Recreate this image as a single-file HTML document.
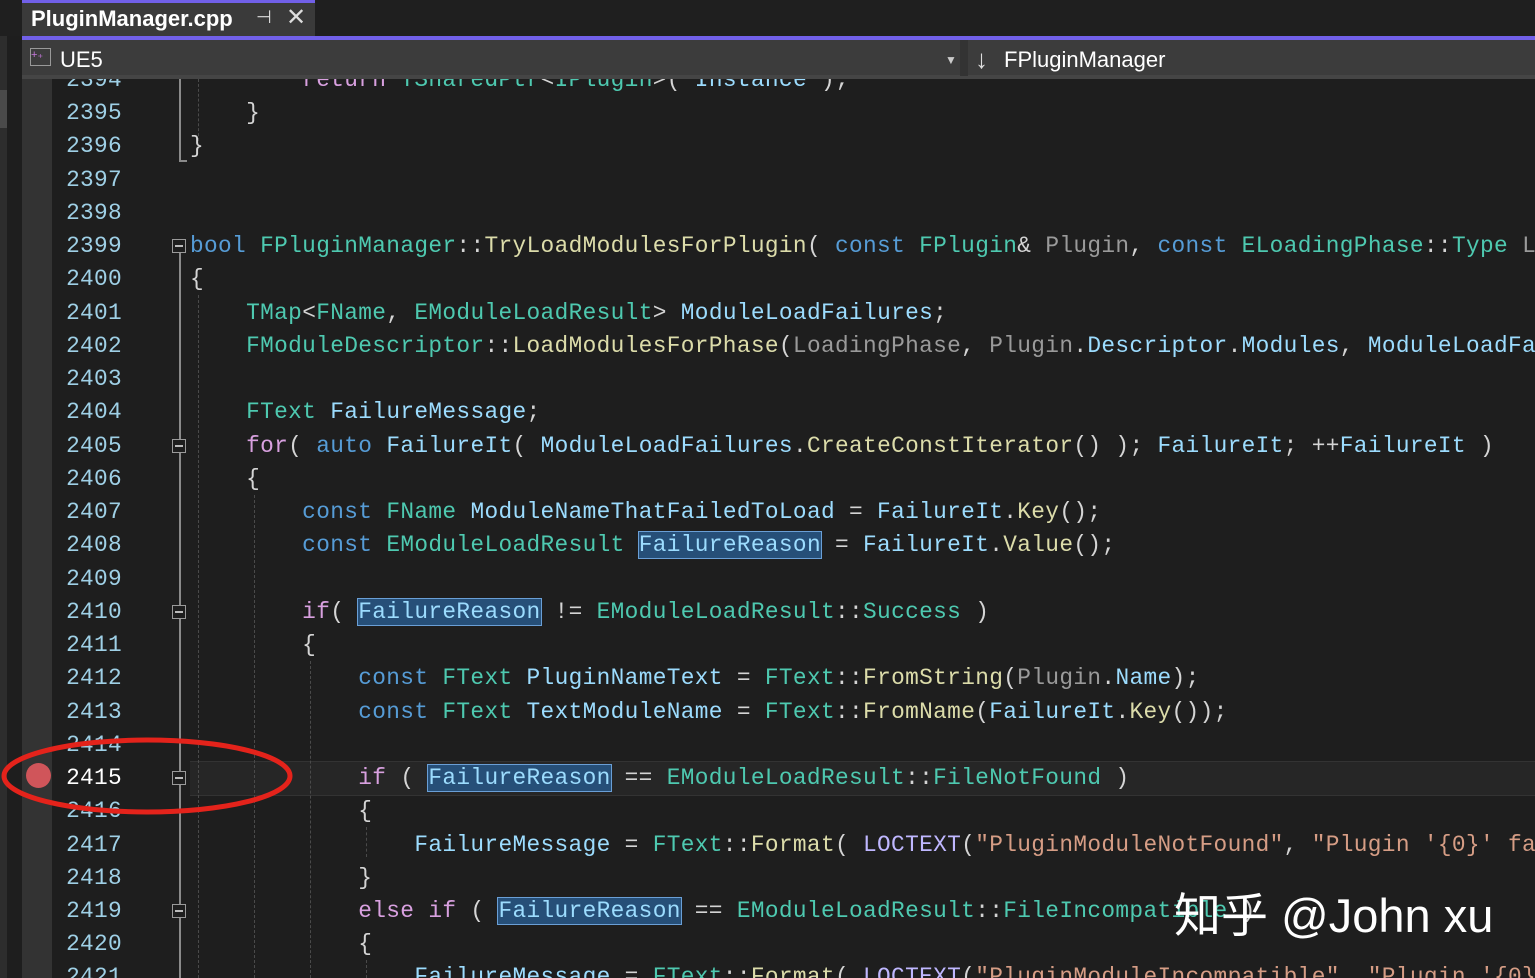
<!DOCTYPE html>
<html><head><meta charset="utf-8"><style>
body{margin:0;width:1535px;height:978px;overflow:hidden;background:#1e1e1e;position:relative;font-family:"Liberation Sans",sans-serif}
.abs{position:absolute}
.code{position:absolute;left:190px;white-space:pre;font-family:"Liberation Mono",monospace;font-size:22.8px;letter-spacing:0.34px;color:#d4d4d4;line-height:33.24px;height:33.24px}
.ln{position:absolute;left:40px;width:82px;text-align:right;font-family:"Liberation Mono",monospace;font-size:22.8px;letter-spacing:0.3px;color:#9fd0e6;line-height:33.24px}
.k{color:#569cd6}.c{color:#d8a0df}.t{color:#4ec9b0}.f{color:#dcdcaa}.v{color:#9cdcfe}.s{color:#d69d85}.g{color:#9a9a9a}.m{color:#bfb7ff}
.h{background:#264f78;outline:1.5px solid #6a9fd6}
.guide{position:absolute;width:0;border-left:1.5px dashed #4a4a4a}
.box{position:absolute;width:12px;height:12px;border:1.5px solid #9a9a9a;background:#1e1e1e;left:172px}
.box:after{content:"";position:absolute;left:2px;right:2px;top:5px;height:1.5px;background:#bbb}
</style></head><body>
<div class="abs" style="left:0;top:0;width:1535px;height:36px;background:#1f1f1f"></div>
<div class="abs" style="left:22px;top:0;width:293px;height:36px;background:#3a3a3a;border-top:3px solid #7160e8;box-sizing:border-box"></div>
<div class="abs" style="left:31px;top:6px;font-size:22px;font-weight:bold;color:#fff">PluginManager.cpp</div>
<div class="abs" style="left:256px;top:7px;font-size:18px;color:#ddd">⊣</div>
<div class="abs" style="left:286px;top:3px;font-size:24px;color:#ddd">✕</div>
<div class="abs" style="left:22px;top:36px;width:1513px;height:4px;background:#7160e8"></div>
<div class="abs" style="left:22px;top:40px;width:1513px;height:38px;background:#3c3c3c"></div>
<div class="abs" style="left:22px;top:75px;width:1513px;height:4px;background:#454545"></div>
<div class="abs" style="left:30px;top:48px;width:21px;height:18px;border:1.5px solid #999;box-sizing:border-box;color:#c678dd;font-size:11px;line-height:12px">+₊</div>
<div class="abs" style="left:60px;top:47px;font-size:22px;color:#fff">UE5</div>
<div class="abs" style="left:945px;top:53px;font-size:12px;color:#ccc">▼</div>
<div class="abs" style="left:960px;top:40px;width:8px;height:36px;background:#333"></div>
<div class="abs" style="left:975px;top:44px;font-size:26px;color:#ddd">↓</div>
<div class="abs" style="left:1004px;top:47px;font-size:22px;color:#fff">FPluginManager</div>
<div class="abs" style="left:0;top:36px;width:7px;height:942px;background:#2d2d2d"></div>
<div class="abs" style="left:0;top:90px;width:7px;height:38px;background:#4a4a4a"></div>
<div class="abs" style="left:22px;top:79px;width:30px;height:899px;background:#333"></div>
<div class="abs" style="left:190px;top:761px;width:1345px;height:33px;background:#262626;border-top:1px solid #333;border-bottom:1px solid #333"></div>
<div class="abs" style="left:0;top:64px;width:1535px;height:914px;overflow:hidden;clip-path:inset(15px 0 0 0)">
<div style="position:relative;top:0">
<div class="ln" style="top:0">2394</div><div class="ln" style="top:33.24px">2395</div><div class="ln" style="top:66.48px">2396</div><div class="ln" style="top:99.72px">2397</div><div class="ln" style="top:132.96px">2398</div><div class="ln" style="top:166.2px">2399</div><div class="ln" style="top:199.44px">2400</div><div class="ln" style="top:232.68px">2401</div><div class="ln" style="top:265.92px">2402</div><div class="ln" style="top:299.16px">2403</div><div class="ln" style="top:332.4px">2404</div><div class="ln" style="top:365.64px">2405</div><div class="ln" style="top:398.88px">2406</div><div class="ln" style="top:432.12px">2407</div><div class="ln" style="top:465.36px">2408</div><div class="ln" style="top:498.6px">2409</div><div class="ln" style="top:531.84px">2410</div><div class="ln" style="top:565.08px">2411</div><div class="ln" style="top:598.32px">2412</div><div class="ln" style="top:631.56px">2413</div><div class="ln" style="top:664.8px">2414</div><div class="ln" style="top:698.04px;color:#fff">2415</div><div class="ln" style="top:731.28px">2416</div><div class="ln" style="top:764.52px">2417</div><div class="ln" style="top:797.76px">2418</div><div class="ln" style="top:831px">2419</div><div class="ln" style="top:864.24px">2420</div><div class="ln" style="top:897.48px">2421</div>

<div class="code" style="top:0">        <span class="c">return</span> <span class="t">TSharedPtr</span>&lt;<span class="t">IPlugin</span>&gt;( <span class="v">Instance</span> );</div>
<div class="code" style="top:33.24px">    }</div>
<div class="code" style="top:66.48px">}</div>
<div class="code" style="top:166.2px"><span class="k">bool</span> <span class="t">FPluginManager</span>::<span class="f">TryLoadModulesForPlugin</span>( <span class="k">const</span> <span class="t">FPlugin</span>&amp; <span class="g">Plugin</span>, <span class="k">const</span> <span class="t">ELoadingPhase</span>::<span class="t">Type</span> <span class="g">L</span></div>
<div class="code" style="top:199.44px">{</div>
<div class="code" style="top:232.68px">    <span class="t">TMap</span>&lt;<span class="t">FName</span>, <span class="t">EModuleLoadResult</span>&gt; <span class="v">ModuleLoadFailures</span>;</div>
<div class="code" style="top:265.92px">    <span class="t">FModuleDescriptor</span>::<span class="f">LoadModulesForPhase</span>(<span class="g">LoadingPhase</span>, <span class="g">Plugin</span>.<span class="v">Descriptor</span>.<span class="v">Modules</span>, <span class="v">ModuleLoadFa</span></div>
<div class="code" style="top:332.4px">    <span class="t">FText</span> <span class="v">FailureMessage</span>;</div>
<div class="code" style="top:365.64px">    <span class="c">for</span>( <span class="k">auto</span> <span class="v">FailureIt</span>( <span class="v">ModuleLoadFailures</span>.<span class="f">CreateConstIterator</span>() ); <span class="v">FailureIt</span>; ++<span class="v">FailureIt</span> )</div>
<div class="code" style="top:398.88px">    {</div>
<div class="code" style="top:432.12px">        <span class="k">const</span> <span class="t">FName</span> <span class="v">ModuleNameThatFailedToLoad</span> = <span class="v">FailureIt</span>.<span class="f">Key</span>();</div>
<div class="code" style="top:465.36px">        <span class="k">const</span> <span class="t">EModuleLoadResult</span> <span class="v h">FailureReason</span> = <span class="v">FailureIt</span>.<span class="f">Value</span>();</div>
<div class="code" style="top:531.84px">        <span class="c">if</span>( <span class="v h">FailureReason</span> != <span class="t">EModuleLoadResult</span>::<span class="t">Success</span> )</div>
<div class="code" style="top:565.08px">        {</div>
<div class="code" style="top:598.32px">            <span class="k">const</span> <span class="t">FText</span> <span class="v">PluginNameText</span> = <span class="t">FText</span>::<span class="f">FromString</span>(<span class="g">Plugin</span>.<span class="v">Name</span>);</div>
<div class="code" style="top:631.56px">            <span class="k">const</span> <span class="t">FText</span> <span class="v">TextModuleName</span> = <span class="t">FText</span>::<span class="f">FromName</span>(<span class="v">FailureIt</span>.<span class="f">Key</span>());</div>
<div class="code" style="top:698.04px">            <span class="c">if</span> ( <span class="v h">FailureReason</span> == <span class="t">EModuleLoadResult</span>::<span class="t">FileNotFound</span> )</div>
<div class="code" style="top:731.28px">            {</div>
<div class="code" style="top:764.52px">                <span class="v">FailureMessage</span> = <span class="t">FText</span>::<span class="f">Format</span>( <span class="m">LOCTEXT</span>(<span class="s">"PluginModuleNotFound"</span>, <span class="s">"Plugin '{0}' fa</span></div>
<div class="code" style="top:797.76px">            }</div>
<div class="code" style="top:831px">            <span class="c">else if</span> ( <span class="v h">FailureReason</span> == <span class="t">EModuleLoadResult</span>::<span class="t">FileIncompatible</span> )</div>
<div class="code" style="top:864.24px">            {</div>
<div class="code" style="top:897.48px">                <span class="v">FailureMessage</span> = <span class="t">FText</span>::<span class="f">Format</span>( <span class="m">LOCTEXT</span>(<span class="s">"PluginModuleIncompatible"</span>, <span class="s">"Plugin '{0}</span></div>
</div></div>
<div class="abs" style="left:179px;top:79px;width:1.5px;height:82px;background:#8a8a8a"></div>
<div class="abs" style="left:179px;top:160px;width:8px;height:1.5px;background:#8a8a8a"></div>
<div class="abs" style="left:179px;top:247px;width:1.5px;height:731px;background:#8a8a8a"></div>
<div class="box" style="top:239px"></div>
<div class="box" style="top:439px"></div>
<div class="box" style="top:605px"></div>
<div class="box" style="top:771px"></div>
<div class="box" style="top:904px"></div>
<div class="guide" style="left:198px;top:79px;height:62px"></div>
<div class="guide" style="left:198px;top:295px;height:683px"></div>
<div class="guide" style="left:254px;top:495px;height:483px"></div>
<div class="guide" style="left:310px;top:661px;height:317px"></div>
<div class="guide" style="left:366px;top:827px;height:30px"></div>
<div class="guide" style="left:366px;top:960px;height:18px"></div>
<div class="abs" style="left:26px;top:763px;width:25px;height:25px;border-radius:50%;background:#d0555a"></div>
<svg class="abs" style="left:0;top:730px" width="300" height="95"><ellipse cx="147" cy="46" rx="143" ry="36" fill="none" stroke="#e4231b" stroke-width="5"/></svg>
<div class="abs" style="left:1174px;top:877px;font-family:'Liberation Sans','Noto Sans CJK SC',sans-serif;font-size:47px;color:#fff;white-space:nowrap">知乎 @John xu</div>
</body></html>
